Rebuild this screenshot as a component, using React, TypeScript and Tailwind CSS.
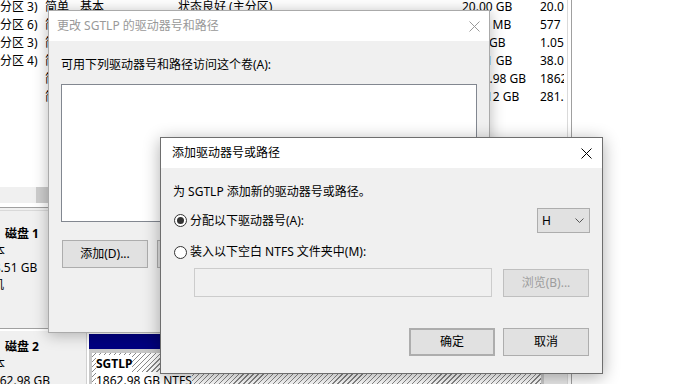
import React from "react";

const rows = [
  { name: "分区 3)", layout: "简单", type: "基本", status: "状态良好 (主分区)", cap: "20.00 GB", free: "20.00 GB" },
  { name: "分区 6)", layout: "简单", type: "基本", status: "状态良好 (OEM 分区)", cap: "1000 MB", free: "577 MB" },
  { name: "分区 3)", layout: "简单", type: "基本", status: "状态良好 (恢复分区)", cap: "1.07 GB", free: "1.05 GB" },
  { name: "分区 4)", layout: "简单", type: "基本", status: "状态良好 (主分区)", cap: "50.01 GB", free: "38.07 GB" },
  { name: "", layout: "简单", type: "基本", status: "状态良好 (主分区)", cap: "1862.98 GB", free: "1862.86 GB" },
  { name: "", layout: "简单", type: "基本", status: "状态良好 (主分区)", cap: "297.12 GB", free: "281.96 GB" },
];

function CloseIcon({ color }: { color: string }) {
  return (
    <svg width="11" height="11" viewBox="0 0 11 11" fill="none" stroke={color} strokeWidth="1">
      <path d="M0.5 0.5 L10.5 10.5 M10.5 0.5 L0.5 10.5" />
    </svg>
  );
}

function Radio({ checked }: { checked?: boolean }) {
  return (
    <span className="flex h-[13px] w-[13px] shrink-0 items-center justify-center rounded-full border border-[#333333] bg-white">
      {checked && <span className="h-[7px] w-[7px] rounded-full bg-[#333333]" />}
    </span>
  );
}

function Btn({ children, className = "" }: { children: React.ReactNode; className?: string }) {
  return (
    <div
      className={
        "flex h-[28px] w-[86px] shrink-0 items-center justify-center border border-[#adadad] bg-[#e1e1e1] " +
        className
      }
    >
      {children}
    </div>
  );
}

export default function App() {
  return (
    <div className="relative h-[384px] w-[691px] overflow-hidden bg-white font-['Noto_Sans','Noto_Sans_CJK_SC',sans-serif] text-[12px] leading-[16px] text-black">
      {/* background: disk management window */}
      <div className="flex h-full">
        <div className="flex h-full w-[568px] flex-col border-r border-[#dadada]">
          {/* volume list */}
          <div className="h-[187px] shrink-0 overflow-hidden bg-white">
            <div className="-mt-[2px]">
              {rows.map((r, i) => (
                <div
                  key={i}
                  className="grid h-[18px] grid-cols-[45px_35px_98px_284px_78px_24px] items-center whitespace-nowrap leading-[18px]"
                >
                  <div>{r.name}</div>
                  <div>{r.layout}</div>
                  <div>{r.type}</div>
                  <div>{r.status}</div>
                  <div>{r.cap}</div>
                  <div className="overflow-hidden">{r.free}</div>
                </div>
              ))}
            </div>
          </div>
          {/* horizontal scrollbar */}
          <div className="flex h-[16px] shrink-0 bg-[#f0f0f0] pl-[36px]">
            <div className="w-[300px] bg-[#cdcdcd]" />
          </div>
          {/* splitter */}
          <div className="h-[4px] shrink-0 bg-white" />
          <div className="h-px shrink-0 bg-[#a0a0a0]" />
          <div className="h-[2px] shrink-0 bg-[#f0f0f0]" />
          <div className="h-px shrink-0 bg-[#d9d9d9]" />
          {/* disk 1 */}
          <div className="flex h-[117px] shrink-0">
            <div className="flex w-[87px] flex-col overflow-hidden whitespace-nowrap border-r border-[#d0d0d0] bg-[#f0f0f0] pt-[14px] leading-[17px]">
              <div className="h-[17px] pl-[5px] font-bold">磁盘 1</div>
              <div className="-ml-[19px] h-[17px]">基本</div>
              <div className="-ml-[20px] h-[17px]">238.51 GB</div>
              <div className="-ml-[20px] h-[17px]">联机</div>
            </div>
            <div className="flex-1 bg-white" />
          </div>
          <div className="h-px shrink-0 bg-[#a0a0a0]" />
          <div className="h-[2px] shrink-0 bg-white" />
          {/* disk 2 */}
          <div className="flex min-h-0 flex-1 overflow-hidden">
            <div className="flex w-[87px] flex-col overflow-hidden whitespace-nowrap border-r border-[#d0d0d0] bg-[#f0f0f0] pt-[7px] leading-[17px]">
              <div className="h-[17px] shrink-0 pl-[5px] font-bold">磁盘 2</div>
              <div className="-ml-[19px] h-[17px] shrink-0">基本</div>
              <div className="-ml-[14px] h-[17px] shrink-0">1862.98 GB</div>
            </div>
            <div className="flex flex-1 bg-white pl-[2px] pt-[3px]">
              <div className="flex w-[455px] flex-col">
                <div className="h-[15px] shrink-0 bg-[#000080]" />
                <div className="flex-1 shrink-0 border-[3px] border-t-4 border-[#c8c8c8] bg-[repeating-linear-gradient(135deg,#ffffff_0px,#ffffff_2.6px,#8a8a8a_2.6px,#8a8a8a_3.5px)] pb-[20px] pl-[4px] pt-[2px] leading-[17px]">
                  <div className="h-[17px]">
                    <span className="bg-white font-bold">SGTLP</span>
                  </div>
                  <div className="h-[17px] whitespace-nowrap">
                    <span className="bg-white">1862.98 GB NTFS</span>
                  </div>
                </div>
              </div>
              <div className="flex-1 bg-[#e9e9e9]" />
            </div>
          </div>
        </div>
        <div className="w-[3px] bg-white" />
        <div className="w-px bg-[#a0a0a0]" />
      </div>

      {/* dialog 1: change drive letter (inactive) */}
      <div className="absolute left-[48px] top-[10px] flex h-[323px] w-[442px] flex-col border border-[#aaaaaa] bg-[#f0f0f0] shadow-[0_2px_14px_rgba(0,0,0,0.28)]">
        <div className="flex h-[30px] items-center justify-between bg-white pl-[8px] pr-[9px] text-[#999999]">
          <span>更改 SGTLP 的驱动器号和路径</span>
          <CloseIcon color="#999999" />
        </div>
        <div className="flex flex-1 flex-col pl-[12px] pt-[16px]">
          <div className="h-[16px]">可用下列驱动器号和路径访问这个卷(A):</div>
          <div className="mt-[11px] h-[138px] w-[416px] border border-[#828790] bg-white" />
          <div className="mt-[18px] flex gap-[9px] pl-[1px]">
            <Btn className="h-[27px]">添加(D)...</Btn>
            <Btn className="h-[27px]">更改(C)...</Btn>
            <Btn className="h-[27px]">删除(R)</Btn>
          </div>
        </div>
      </div>

      {/* dialog 2: add drive letter (active) */}
      <div className="absolute left-[160px] top-[137px] flex h-[237px] w-[443px] flex-col border border-[#6e6e6e] bg-[#f0f0f0] shadow-[0_3px_16px_rgba(0,0,0,0.32)]">
        <div className="flex h-[30px] items-center justify-between bg-white pl-[11px] pr-[10px]">
          <span>添加驱动器号或路径</span>
          <CloseIcon color="#000000" />
        </div>
        <div className="flex flex-1 flex-col pl-[12px] pr-[13px] pt-[16px]">
          <div className="h-[16px]">为 SGTLP 添加新的驱动器号或路径。</div>
          <div className="mt-[8px] flex h-[25px] items-center justify-between">
            <div className="flex items-center gap-[3px] pl-[1px]">
              <Radio checked />
              <span>分配以下驱动器号(A):</span>
            </div>
            <div className="-mr-[1px] flex h-[25px] w-[53px] items-center justify-between border border-[#adadad] bg-[#e1e1e1] pl-[4px] pr-[5px]">
              <span>H</span>
              <svg width="9" height="5" viewBox="0 0 9 5" fill="none" stroke="#555555" strokeWidth="1">
                <path d="M0.5 0.5 L4.5 4.5 L8.5 0.5" />
              </svg>
            </div>
          </div>
          <div className="mt-[11px] flex h-[16px] items-center gap-[3px] pl-[1px]">
            <Radio />
            <span>装入以下空白 NTFS 文件夹中(M):</span>
          </div>
          <div className="mt-[8px] flex items-center gap-[11px] pl-[21px]">
            <div className="h-[29px] w-[298px] border border-[#cccccc] bg-[#f0f0f0]" />
            <Btn className="border-[#bfbfbf] bg-[#cccccc] text-[#9d9d9d]">浏览(B)...</Btn>
          </div>
          <div className="mt-[31px] flex justify-end gap-[8px]">
            <Btn className="border-2 border-[#0078d7]">确定</Btn>
            <Btn>取消</Btn>
          </div>
        </div>
      </div>
    </div>
  );
}
